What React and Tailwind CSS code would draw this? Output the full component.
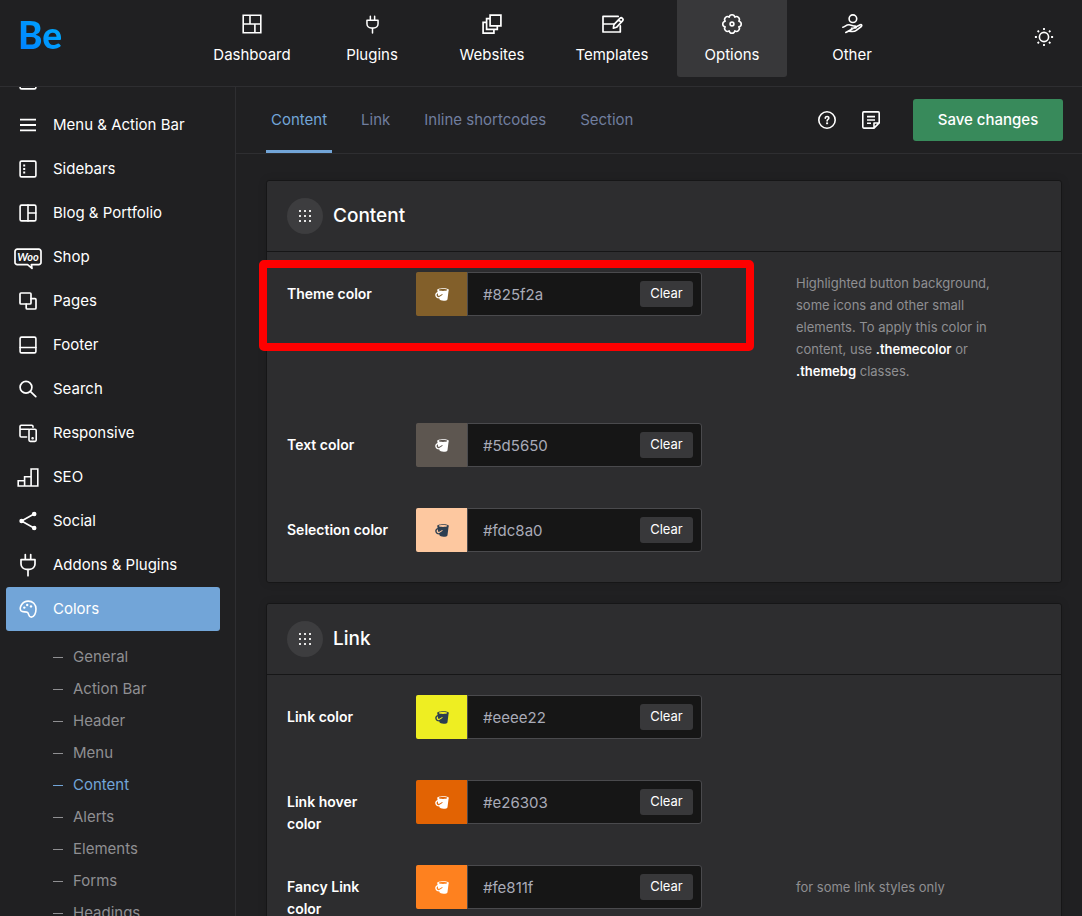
import React from "react";

function Icon({ size = 24, box = 24, width = 1.5, className = "", children }) {
  return (
    <svg
      width={size}
      height={size}
      viewBox={`0 0 ${box} ${box}`}
      fill="none"
      stroke="currentColor"
      strokeWidth={width}
      strokeLinecap="round"
      strokeLinejoin="round"
      className={`shrink-0 ${className}`}
      aria-hidden="true"
    >
      {children}
    </svg>
  );
}

const PlugShape = () => (
  <path d="M5 6.7h14v4.3a5.3 5.3 0 0 1-5.3 5.3h-3.4A5.3 5.3 0 0 1 5 11zM9.3 1.5v5.2M14.7 1.5v5.2M12 16.3v6.4" />
);

// Eight-lobed outline of the settings flower.
const lobes = Array.from({ length: 8 }, (_, i) => {
  const a = ((22.5 + 45 * i) * Math.PI) / 180;
  return [12 + 7.4 * Math.cos(a), 12 + 7.4 * Math.sin(a)];
});
const flowerPath =
  `M${lobes[7].join(" ")}` + lobes.map((p) => `A2.87 2.87 0 0 1 ${p.join(" ")}`).join("") + "z";

const navItems = [
  {
    label: "Dashboard",
    icon: (
      <Icon width={1.6}>
        <path strokeLinejoin="miter" d="M3.2 3.2h17.6v17.6H3.2zM3.2 12h17.6M10 3.2V12M14.9 12v8.8" />
      </Icon>
    ),
  },
  {
    label: "Plugins",
    icon: (
      <Icon size={19} width={1.9}>
        <PlugShape />
      </Icon>
    ),
  },
  {
    label: "Websites",
    icon: (
      <Icon width={1.7}>
        <path
          strokeLinejoin="miter"
          d="M10.1 3.1h10.8v10.8H10.1zM10.1 6.7H6.6v10.7h10.7v-3.5M6.6 10.3H3.1v10.8h10.8v-3.7"
        />
      </Icon>
    ),
  },
  {
    label: "Templates",
    icon: (
      <Icon width={1.7}>
        <path d="M18.2 4.4H3v15.6h17.3v-6.2M3 12h11" />
        <path d="M13.4 16.2l.5-3.6 6-6.2a1.75 1.75 0 0 1 2.6 2.4l-6 6.5zM18.6 7.8l2.5 2.4" />
      </Icon>
    ),
  },
  {
    label: "Options",
    active: true,
    icon: (
      <Icon width={1.6}>
        <path d={flowerPath} />
        <circle cx="12" cy="12" r="1.9" />
      </Icon>
    ),
  },
  {
    label: "Other",
    icon: (
      <Icon width={1.6}>
        <circle cx="12.9" cy="6.700" r="3.800" />
        <path d="M2.900 15.300C5 14.800 6.200 12.800 8.900 12.800c2.300 0 3.800 1.300 6.300 1.300 1.300 0 1.500 1.700.2 1.900l-4 .2M16.300 14.700l4-1.900c1.400-.5 2 .8 1 1.700l-5 3.900c-2.500 1.900-5 .7-7.900.9L5.800 20.400z" />
      </Icon>
    ),
  },
];

const sideItems = [
  {
    label: "Menu & Action Bar",
    icon: (
      <Icon width={1.8}>
        <path strokeLinecap="butt" d="M4 6.6h16M4 12h16M4 17.4h16" />
      </Icon>
    ),
  },
  {
    label: "Sidebars",
    icon: (
      <Icon width={1.6}>
        <rect x="4.1" y="4.1" width="15.8" height="15.8" rx="1.5" />
        <path strokeLinecap="butt" strokeWidth="2" d="M7.2 8.4h2M7.2 12h2M7.2 15.6h2" />
      </Icon>
    ),
  },
  {
    label: "Blog & Portfolio",
    icon: (
      <Icon width={1.6}>
        <rect x="4.1" y="4.1" width="15.8" height="15.8" rx="1.5" />
        <path d="M12 4.1v15.8M12 12h7.9" />
      </Icon>
    ),
  },
  {
    label: "Shop",
    icon: (
      <svg width="28" height="22" viewBox="0 0 28 22" className="mt-1 -mx-0.5 shrink-0" aria-hidden="true">
        <path
          d="M3.2 1.2h21.6a2.2 2.2 0 0 1 2.2 2.2v11a2.2 2.2 0 0 1-2.2 2.2h-7.4l.6 3.8-4.4-3.8H3.2A2.2 2.2 0 0 1 1 14.4v-11a2.2 2.2 0 0 1 2.2-2.2z"
          fill="none"
          stroke="currentColor"
          strokeWidth="1.700"
          strokeLinejoin="round"
        />
        <text
          x="14"
          y="13"
          textAnchor="middle"
          fill="currentColor"
          fontFamily="Lato, sans-serif"
          fontSize="11"
          fontWeight="700"
          fontStyle="italic"
        >
          Woo
        </text>
      </svg>
    ),
  },
  {
    label: "Pages",
    icon: (
      <Icon width={1.7}>
        <rect x="4" y="4" width="11" height="11" rx="1" />
        <path d="M10.2 15v4a1 1 0 0 0 1 1H19a1 1 0 0 0 1-1v-8.300a1 1 0 0 0-1-1h-4" />
      </Icon>
    ),
  },
  {
    label: "Footer",
    icon: (
      <Icon width={1.6}>
        <rect x="4.1" y="4.1" width="15.8" height="15.8" rx="1.5" />
        <path d="M4.100 14.500h15.800" />
      </Icon>
    ),
  },
  {
    label: "Search",
    icon: (
      <Icon width={1.7}>
        <circle cx="10" cy="10.200" r="5.900" />
        <path d="M14.300 14.400l5.500 5.300" />
      </Icon>
    ),
  },
  {
    label: "Responsive",
    icon: (
      <Icon width={1.6}>
        <path d="M10.600 16H5.200a1.200 1.200 0 0 1-1.200-1.200V5.400a1.200 1.200 0 0 1 1.200-1.200h10.600a1.200 1.200 0 0 1 1.200 1.200v.8M4 8.300h9" />
        <rect x="13" y="8.200" width="7.200" height="12.200" rx="1.300" />
        <circle cx="16.600" cy="17.200" r=".5" fill="currentColor" />
      </Icon>
    ),
  },
  {
    label: "SEO",
    icon: (
      <Icon width={1.6}>
        <path strokeLinejoin="miter" d="M2.200 21v-5.200h6.400V21zM8.600 21v-9.300h6.500V21zM15.100 21V4h6.700v17z" />
      </Icon>
    ),
  },
  {
    label: "Social",
    icon: (
      <Icon width={1.6}>
        <path d="M18 5L5.500 12 18 19" />
        <circle cx="5.600" cy="12" r="1.500" fill="currentColor" />
        <circle cx="18.200" cy="5" r="1.500" fill="currentColor" />
        <circle cx="18.200" cy="19" r="1.500" fill="currentColor" />
      </Icon>
    ),
  },
  {
    label: "Addons & Plugins",
    icon: (
      <Icon width={1.7}>
        <PlugShape />
      </Icon>
    ),
  },
  {
    label: "Colors",
    active: true,
    icon: (
      <Icon width={1.6}>
        <path d="M12.200 4.100c4.600 0 7.800 3.200 7.800 8 0 4.200-1.800 8-4.700 8-3.200 0-2-3.300-3.800-4.700-1.700-1.300-4.700.4-6.600-1.600C2.900 10.700 6.200 4.100 12.200 4.100z" />
        <g fill="currentColor" stroke="none">
          <circle cx="8.300" cy="10.600" r="1.200" />
          <circle cx="11.200" cy="8" r="1.200" />
          <circle cx="15" cy="9.400" r="1.200" />
        </g>
      </Icon>
    ),
  },
];

const subItems = ["General", "Action Bar", "Header", "Menu", "Content", "Alerts", "Elements", "Forms", "Headings"];
const tabs = ["Content", "Link", "Inline shortcodes", "Section"];

function Bucket() {
  return (
    <svg width="14" height="13" viewBox="0 0 14 13" aria-hidden="true">
      <path
        fill="currentColor"
        fillRule="evenodd"
        d="M8 .2c3.300 0 5.900.6 5.900 1.700 0 .2-.1.400-.3.600l-1.100 8.700c-.2 1-1.800 1.500-4 1.500-2.100 0-3.700-.5-4-1.400l-.1-.7C1.700 10.500.2 9 .2 7.100c0-1.500.8-2.500 2.400-3L2.200 2C2 .9 4.900.2 8 .2zM8 1.100c-2.500 0-4.300.4-4.300.9s1.800.9 4.300.9 4.300-.4 4.300-.9-1.800-.9-4.300-.9zM2.800 5.300c-.8.400-1.200 1-1.200 1.700 0 1.100.9 1.900 2.200 2.200l3.900-2.500-.5-.8-3.300 2-.8-.3z"
      />
    </svg>
  );
}

function ColorRow({ id, label, value, swatch, dark, marked, children }) {
  return (
    <div className="relative grid grid-cols-[129px_minmax(0,1fr)_minmax(0,245px)] items-start">
      <label htmlFor={id} className="-mb-3 pr-6 pt-[11px] text-[14px] font-semibold leading-[22px] text-white">
        {label}
      </label>
      <div className="flex h-11 max-w-[286px] items-center rounded-[3px] border border-[#4a4a4d] bg-[#161616] pr-2">
        <button
          type="button"
          aria-label={`Pick ${label}`}
          className={`-my-px -ml-px flex h-11 w-[51px] shrink-0 items-center justify-center rounded-l-[2px] ${swatch} ${
            dark ? "text-[#2c3e50]" : "text-white"
          }`}
        >
          <Bucket />
        </button>
        <input
          id={id}
          type="text"
          defaultValue={value}
          className="h-full min-w-0 flex-1 border-l border-[#4a4a4d] bg-transparent px-[15px] text-[15px] text-[#a9abb8] outline-none"
        />
        <button
          type="button"
          className="flex h-[26px] w-[53px] shrink-0 items-center justify-center rounded-[3px] bg-[#38383a] text-[13px] text-white"
        >
          Clear
        </button>
      </div>
      <div className="flex min-h-11 items-center pr-8 text-[13px] leading-[22px] text-[#8f8f92]">{children}</div>
      {marked && (
        <div className="pointer-events-none absolute -left-7 -top-3 h-[91px] w-[495px] rounded-[5px] border-8 border-[#fe0000]" />
      )}
    </div>
  );
}

function Card({ title, children }) {
  return (
    <section className="rounded-[3px] border border-[#161617] bg-[#2d2d2f] shadow-[0_0_8px_rgba(0,0,0,0.12)]">
      <header className="flex h-[71px] items-center gap-2.5 border-b border-[#161617] px-5">
        <span className="flex size-9 items-center justify-center rounded-full bg-[#3d3d3f] text-[#e4e4e4]">
          <svg width="12" height="12" viewBox="0 0 12 12" fill="currentColor" aria-hidden="true">
            {[0, 5, 10].map((y) => [0, 5, 10].map((x) => <rect key={`${x}-${y}`} x={x} y={y} width="2" height="2" />))}
          </svg>
        </span>
        <h2 className="text-[19px] font-medium text-white">{title}</h2>
      </header>
      <div className="flex flex-col gap-[41px] px-5 pb-[30px] pt-5">{children}</div>
    </section>
  );
}

export default function App() {
  return (
    <div className="flex h-screen flex-col overflow-hidden bg-[#202022] font-['Inter',sans-serif] text-[14px] text-white">
      <header className="flex h-[87px] shrink-0 items-start border-b border-[#2e2e31]">
        <a href="#home" className="ml-[18px] flex h-[70px] w-[179px] shrink-0 items-center">
          <span className="bg-gradient-to-tr from-[#0078ff] to-[#11b4fb] bg-clip-text font-['Lato',sans-serif] text-[37px] font-black leading-[48px] text-transparent">
            Be
          </span>
        </a>
        <nav className="flex gap-2.5">
          {navItems.map((item) => (
            <a
              key={item.label}
              href={`#${item.label}`}
              className={`flex h-[77px] w-[110px] flex-col items-center rounded-b-[3px] pt-3 text-[15px] ${
                item.active ? "bg-[#38383a]" : ""
              }`}
            >
              <span className="flex h-6 items-center">{item.icon}</span>
              <span className="mt-2 leading-[22px]">{item.label}</span>
            </a>
          ))}
        </nav>
        <button type="button" aria-label="Light mode" className="ml-auto mr-[26px] mt-[25px]">
          <Icon width={1.6}>
            <circle cx="12" cy="12" r="4.600" />
            <path
              strokeWidth="1.800"
              strokeLinecap="butt"
              d="M12 2.900v2M12 19.100v2M2.900 12h2M19.100 12h2M5.600 5.600l1.400 1.400M17 17l1.400 1.400M5.600 18.400L7 17M17 7l1.400-1.400"
            />
          </Icon>
        </button>
      </header>

      <div className="flex min-h-0 flex-1">
        <aside className="w-[236px] shrink-0 overflow-hidden border-r border-[#2e2e31]">
          <nav className="-mt-7 flex flex-col pl-1.5 pr-[15px]">
            <a href="#header" aria-label="Header section" className="flex h-11 items-center pl-2.5">
              <Icon width={1.6}>
                <rect x="4.1" y="4.1" width="15.8" height="15.8" rx="1.5" />
              </Icon>
            </a>
            {sideItems.map((item) => (
              <a
                key={item.label}
                href={`#${item.label}`}
                className={`flex h-11 items-center gap-[13px] rounded-[3px] pl-2.5 text-[15px] ${
                  item.active ? "bg-[#72a5d8]" : ""
                }`}
              >
                {item.icon}
                {item.label}
              </a>
            ))}
            <ul className="mt-2.5 pl-[47px] text-[15px]">
              {subItems.map((name) => (
                <li key={name}>
                  <a
                    href={`#sub-${name}`}
                    className={`flex h-8 items-center gap-2.5 ${name === "Content" ? "text-[#72a5d8]" : "text-[#8f8f92]"}`}
                  >
                    <span className="h-px w-2.5 bg-current" />
                    {name}
                  </a>
                </li>
              ))}
            </ul>
          </nav>
        </aside>

        <main className="flex min-w-0 flex-1 flex-col">
          <div className="flex h-[67px] shrink-0 items-center border-b border-[#2e2e31] pl-[30px] pr-[19px]">
            <nav className="flex gap-6 self-stretch text-[15px]">
              {tabs.map((name) => (
                <a
                  key={name}
                  href={`#tab-${name}`}
                  className={`flex items-center border-b-3 px-[5px] pt-[3px] ${
                    name === "Content" ? "border-[#72a5d8] text-[#72a5d8]" : "border-transparent text-[#707e9f]"
                  }`}
                >
                  {name}
                </a>
              ))}
            </nav>
            <div className="ml-auto flex items-center">
              <button type="button" aria-label="Help" className="mr-5">
                <Icon width={1.6}>
                  <circle cx="12" cy="12" r="8.200" />
                  <path d="M10.300 10.200c0-2.300 3.600-2.200 3.500 0-.1 1.300-1.700 1.300-1.700 2.700" />
                  <path strokeLinecap="butt" strokeWidth="2" d="M12.100 14.400v1.800" />
                </Icon>
              </button>
              <button type="button" aria-label="Notes" className="mr-[30px]">
                <Icon width={1.6}>
                  <path d="M4.800 3.900h14.400a1 1 0 0 1 1 1v10l-5.200 5.200H4.800a1 1 0 0 1-1-1V4.900a1 1 0 0 1 1-1zM20 15h-5v5" />
                  <path strokeLinecap="butt" d="M8 8.600h8M8 12h8M8 15.300h4" />
                </Icon>
              </button>
              <button type="button" className="h-[42px] w-[150px] rounded-[3px] bg-[#388a5b] text-[15px] font-medium text-white">
                Save changes
              </button>
            </div>
          </div>

          <div className="flex min-h-0 flex-1 flex-col gap-5 overflow-hidden pb-5 pl-[30px] pr-5 pt-[26px] *:shrink-0">
            <Card title="Content">
              <ColorRow id="theme" label="Theme color" value="#825f2a" swatch="bg-[#825f2a]" marked>
                <p>
                  Highlighted button background, some icons and other small elements. To apply this color in content, use{" "}
                  <b className="font-semibold text-white">.themecolor</b> or{" "}
                  <b className="font-semibold text-white">.themebg</b> classes.
                </p>
              </ColorRow>
              <ColorRow id="text" label="Text color" value="#5d5650" swatch="bg-[#5d5650]" />
              <ColorRow id="selection" label="Selection color" value="#fdc8a0" swatch="bg-[#fdc8a0]" dark />
            </Card>
            <Card title="Link">
              <ColorRow id="link" label="Link color" value="#eeee22" swatch="bg-[#eeee22]" dark />
              <ColorRow id="hover" label="Link hover color" value="#e26303" swatch="bg-[#e26303]" />
              <ColorRow id="fancy" label="Fancy Link color" value="#fe811f" swatch="bg-[#fe811f]">
                <p>for some link styles only</p>
              </ColorRow>
            </Card>
          </div>
        </main>
      </div>
    </div>
  );
}
